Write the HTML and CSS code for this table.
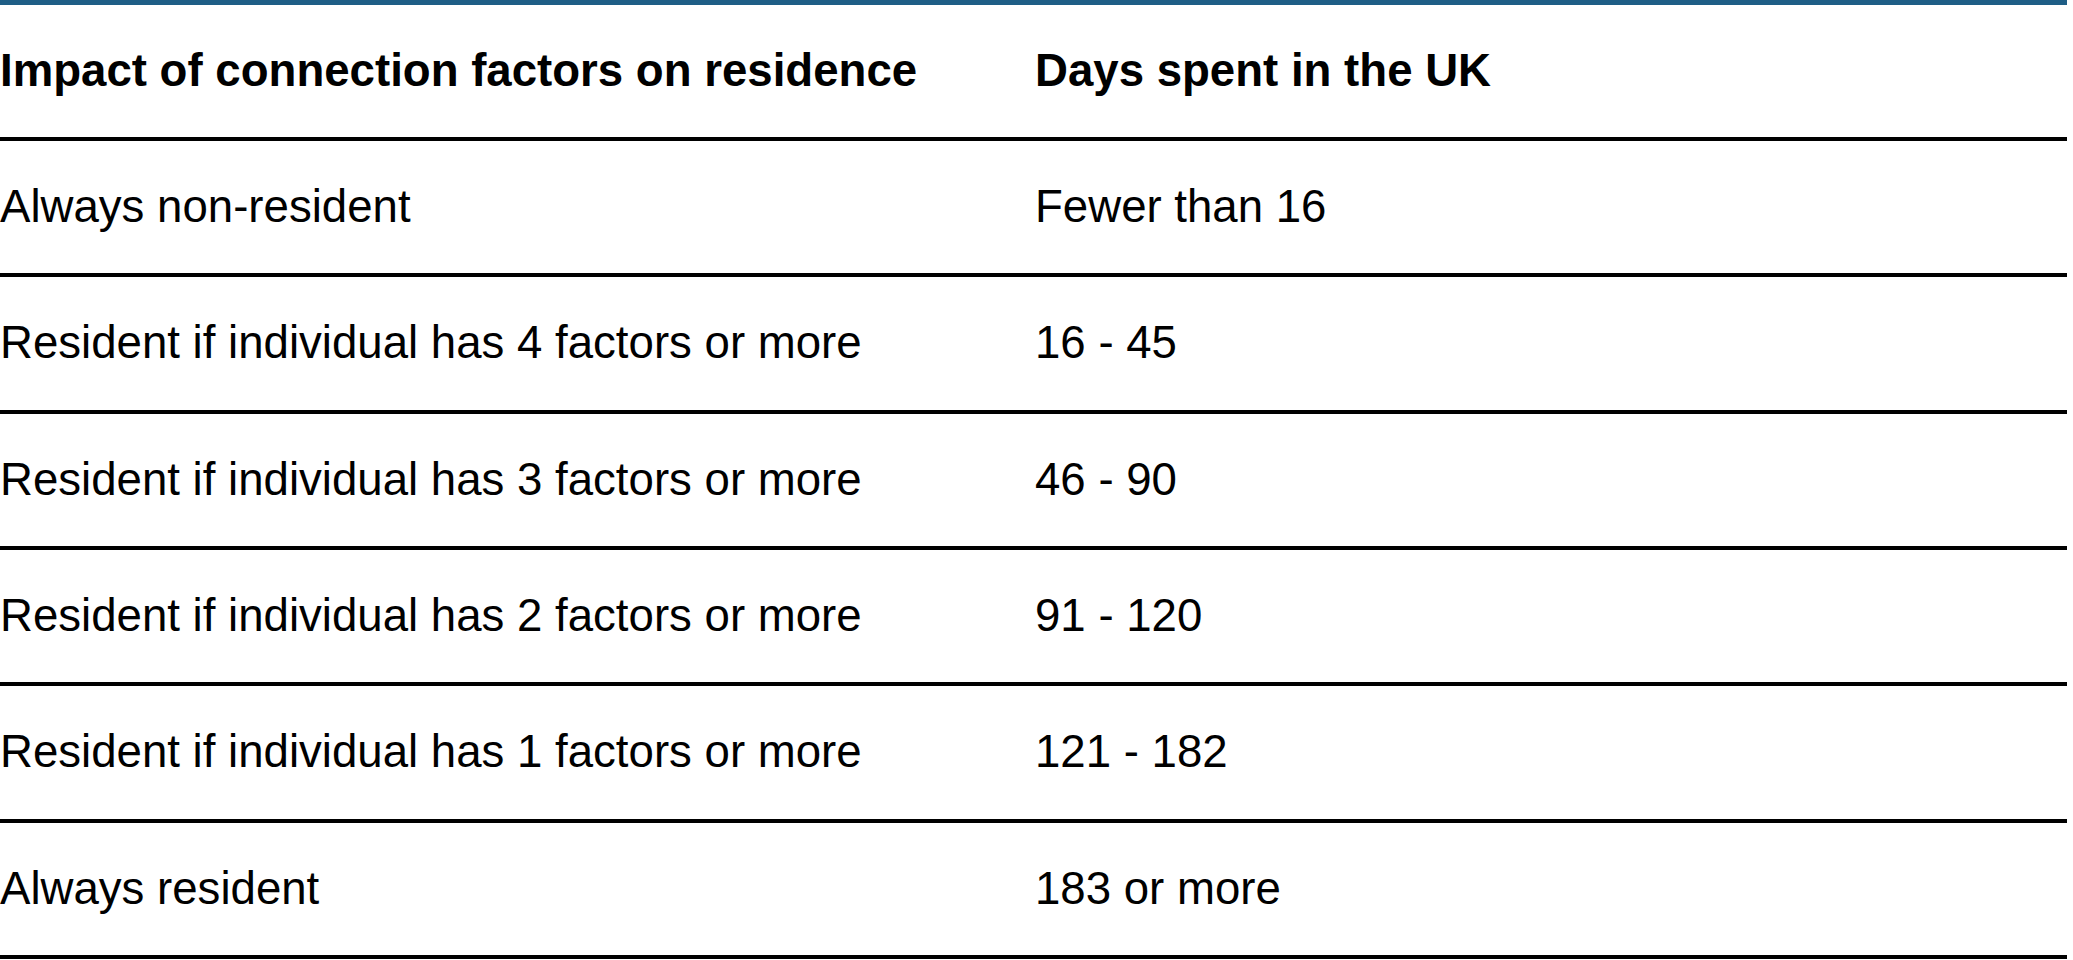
FILE: index.html
```html
<!DOCTYPE html>
<html>
<head>
<meta charset="utf-8">
<link rel="stylesheet" href="styles.css">
</head>
<body>
<div class="table">
  <div class="row head">
    <div class="c1">Impact of connection factors on residence</div>
    <div class="c2">Days spent in the UK</div>
  </div>
  <div class="row">
    <div class="c1">Always non-resident</div>
    <div class="c2">Fewer than 16</div>
  </div>
  <div class="row">
    <div class="c1">Resident if individual has 4 factors or more</div>
    <div class="c2">16 - 45</div>
  </div>
  <div class="row">
    <div class="c1">Resident if individual has 3 factors or more</div>
    <div class="c2">46 - 90</div>
  </div>
  <div class="row">
    <div class="c1">Resident if individual has 2 factors or more</div>
    <div class="c2">91 - 120</div>
  </div>
  <div class="row">
    <div class="c1">Resident if individual has 1 factors or more</div>
    <div class="c2">121 - 182</div>
  </div>
  <div class="row">
    <div class="c1">Always resident</div>
    <div class="c2">183 or more</div>
  </div>
</div>
</body>
</html>
```
FILE: styles.css
```css
html, body {
  margin: 0;
  padding: 0;
  background: #ffffff;
}
.table {
  width: 2067px;
  border-top: 5px solid #1f5e86;
  font-family: "Liberation Sans", Arial, sans-serif;
  font-size: 45.6px;
  color: #000;
}
.row {
  display: flex;
  align-items: center;
  height: 132.33px;
  border-bottom: 4px solid #000;
}
.row.head {
  height: 132px;
  font-weight: bold;
}
.c1 {
  width: 1035px;
  flex: none;
}
.c2 {
  flex: 1;
}
```
